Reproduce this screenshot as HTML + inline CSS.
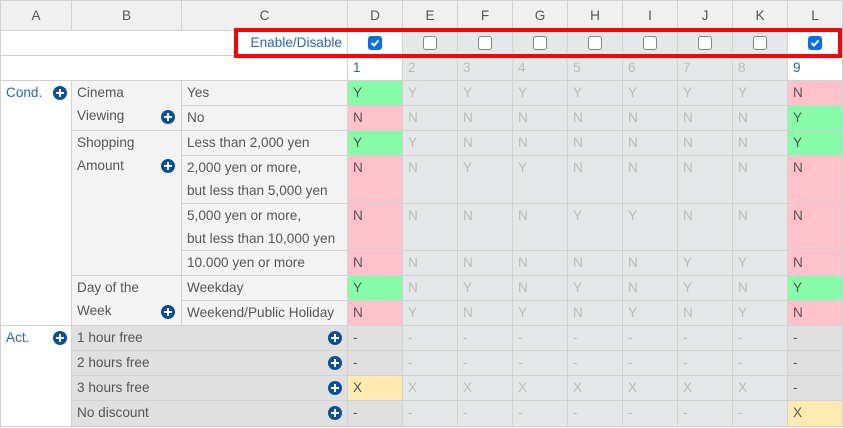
<!DOCTYPE html>
<html><head><meta charset="utf-8"><style>
*{box-sizing:border-box;margin:0;padding:0}
body{width:843px;height:428px;background:#fff;font-family:"Liberation Sans",sans-serif;font-size:13.6px;color:#555;position:relative;overflow:hidden}
table{border-collapse:collapse;table-layout:fixed;position:absolute;left:0;top:0}
td{border:1px solid #d2d2d2;padding:0 0 0 5px;vertical-align:top;line-height:23px;white-space:nowrap;position:relative}
tr.h td{background:#f0f0f0;text-align:center;padding:0;line-height:29px;height:30px}
.b{background:#f3f3f3}
.g{background:#e4e8e8;color:#bbb}
.a{background:#e0e0e0}
.y{background:#86fca8}
.n{background:#ffc1cc}
.x{background:#ffeab2}
.bl{color:#2a67b0}
.p{position:absolute;width:14px;height:14px;border-radius:50%;background:#0b4f9c}
.p:before{content:"";position:absolute;left:3px;top:6px;width:8px;height:2px;background:#fff}
.p:after{content:"";position:absolute;left:6px;top:3px;width:2px;height:8px;background:#fff}
.cb{display:inline-block;width:14px;height:14px;border:1px solid #858585;border-radius:3px;background:#fff;vertical-align:middle}
.ck{display:inline-block;width:14px;height:14px;border-radius:3px;background:#0a6fe0;vertical-align:middle;position:relative}
.ck svg{display:block}
.c{text-align:center;padding:0}
</style></head><body>
<table>
<colgroup><col style="width:71px"><col style="width:110px"><col style="width:166px"><col style="width:55px"><col style="width:55px"><col style="width:55px"><col style="width:55px"><col style="width:55px"><col style="width:55px"><col style="width:55px"><col style="width:55px"><col style="width:55px"></colgroup>
<tr class="h"><td>A</td><td>B</td><td>C</td><td>D</td><td>E</td><td>F</td><td>G</td><td>H</td><td>I</td><td>J</td><td>K</td><td>L</td></tr>
<tr style="height:25px"><td colspan="3" class="bl" style="text-align:right;padding-right:5px">Enable/Disable</td>
<td class="c"><span class="ck"><svg width="14" height="14" viewBox="0 0 14 14"><path d="M3.5 7l2.5 2.5 4.5-5" stroke="#fff" stroke-width="2" fill="none"/></svg></span></td>
<td class="c g"><span class="cb"></span></td><td class="c g"><span class="cb"></span></td><td class="c g"><span class="cb"></span></td><td class="c g"><span class="cb"></span></td><td class="c g"><span class="cb"></span></td><td class="c g"><span class="cb"></span></td><td class="c g"><span class="cb"></span></td>
<td class="c"><span class="ck"><svg width="14" height="14" viewBox="0 0 14 14"><path d="M3.5 7l2.5 2.5 4.5-5" stroke="#fff" stroke-width="2" fill="none"/></svg></span></td></tr>
<tr style="height:25px"><td colspan="3"></td><td class="bl">1</td><td class="g">2</td><td class="g">3</td><td class="g">4</td><td class="g">5</td><td class="g">6</td><td class="g">7</td><td class="g">8</td><td class="bl">9</td></tr>
<tr style="height:25px"><td rowspan="8" class="bl">Cond.<span class="p" style="left:52px;top:5px"></span></td><td rowspan="2" class="b" style="white-space:normal">Cinema<br>Viewing<span class="p" style="right:6px;top:29px"></span></td><td class="b">Yes</td><td class="y">Y</td><td class="g">Y</td><td class="g">Y</td><td class="g">Y</td><td class="g">Y</td><td class="g">Y</td><td class="g">Y</td><td class="g">Y</td><td class="n">N</td></tr>
<tr style="height:25px"><td class="b">No</td><td class="n">N</td><td class="g">N</td><td class="g">N</td><td class="g">N</td><td class="g">N</td><td class="g">N</td><td class="g">N</td><td class="g">N</td><td class="y">Y</td></tr>
<tr style="height:25px"><td rowspan="4" class="b">Shopping<br>Amount<span class="p" style="right:6px;top:28px"></span></td><td class="b">Less than 2,000 yen</td><td class="y">Y</td><td class="g">Y</td><td class="g">N</td><td class="g">N</td><td class="g">N</td><td class="g">N</td><td class="g">N</td><td class="g">N</td><td class="y">Y</td></tr>
<tr style="height:48px"><td class="b">2,000 yen or more,<br>but less than 5,000 yen</td><td class="n">N</td><td class="g">N</td><td class="g">Y</td><td class="g">Y</td><td class="g">N</td><td class="g">N</td><td class="g">N</td><td class="g">N</td><td class="n">N</td></tr>
<tr style="height:47px"><td class="b">5,000 yen or more,<br>but less than 10,000 yen</td><td class="n">N</td><td class="g">N</td><td class="g">N</td><td class="g">N</td><td class="g">Y</td><td class="g">Y</td><td class="g">N</td><td class="g">N</td><td class="n">N</td></tr>
<tr style="height:25px"><td class="b">10.000 yen or more</td><td class="n">N</td><td class="g">N</td><td class="g">N</td><td class="g">N</td><td class="g">N</td><td class="g">N</td><td class="g">Y</td><td class="g">Y</td><td class="n">N</td></tr>
<tr style="height:25px"><td rowspan="2" class="b">Day of the<br>Week<span class="p" style="right:6px;top:29px"></span></td><td class="b">Weekday</td><td class="y">Y</td><td class="g">N</td><td class="g">Y</td><td class="g">N</td><td class="g">Y</td><td class="g">N</td><td class="g">Y</td><td class="g">N</td><td class="y">Y</td></tr>
<tr style="height:25px"><td class="b">Weekend/Public Holiday</td><td class="n">N</td><td class="g">Y</td><td class="g">N</td><td class="g">Y</td><td class="g">N</td><td class="g">Y</td><td class="g">N</td><td class="g">Y</td><td class="n">N</td></tr>
<tr style="height:25px"><td rowspan="4" class="bl">Act.<span class="p" style="left:52px;top:5px"></span></td><td colspan="2" class="a">1 hour free<span class="p" style="right:5px;top:5px"></span></td><td class="a">-</td><td class="g">-</td><td class="g">-</td><td class="g">-</td><td class="g">-</td><td class="g">-</td><td class="g">-</td><td class="g">-</td><td class="a">-</td></tr>
<tr style="height:25px"><td colspan="2" class="a">2 hours free<span class="p" style="right:5px;top:5px"></span></td><td class="a">-</td><td class="g">-</td><td class="g">-</td><td class="g">-</td><td class="g">-</td><td class="g">-</td><td class="g">-</td><td class="g">-</td><td class="a">-</td></tr>
<tr style="height:25px"><td colspan="2" class="a">3 hours free<span class="p" style="right:5px;top:5px"></span></td><td class="x">X</td><td class="g">X</td><td class="g">X</td><td class="g">X</td><td class="g">X</td><td class="g">X</td><td class="g">X</td><td class="g">X</td><td class="a">-</td></tr>
<tr style="height:26px"><td colspan="2" class="a">No discount<span class="p" style="right:5px;top:5px"></span></td><td class="a">-</td><td class="g">-</td><td class="g">-</td><td class="g">-</td><td class="g">-</td><td class="g">-</td><td class="g">-</td><td class="g">-</td><td class="x">X</td></tr>
</table>
<div style="position:absolute;left:234px;top:28px;width:608px;height:30px;border:4px solid #f00"></div>
</body></html>
